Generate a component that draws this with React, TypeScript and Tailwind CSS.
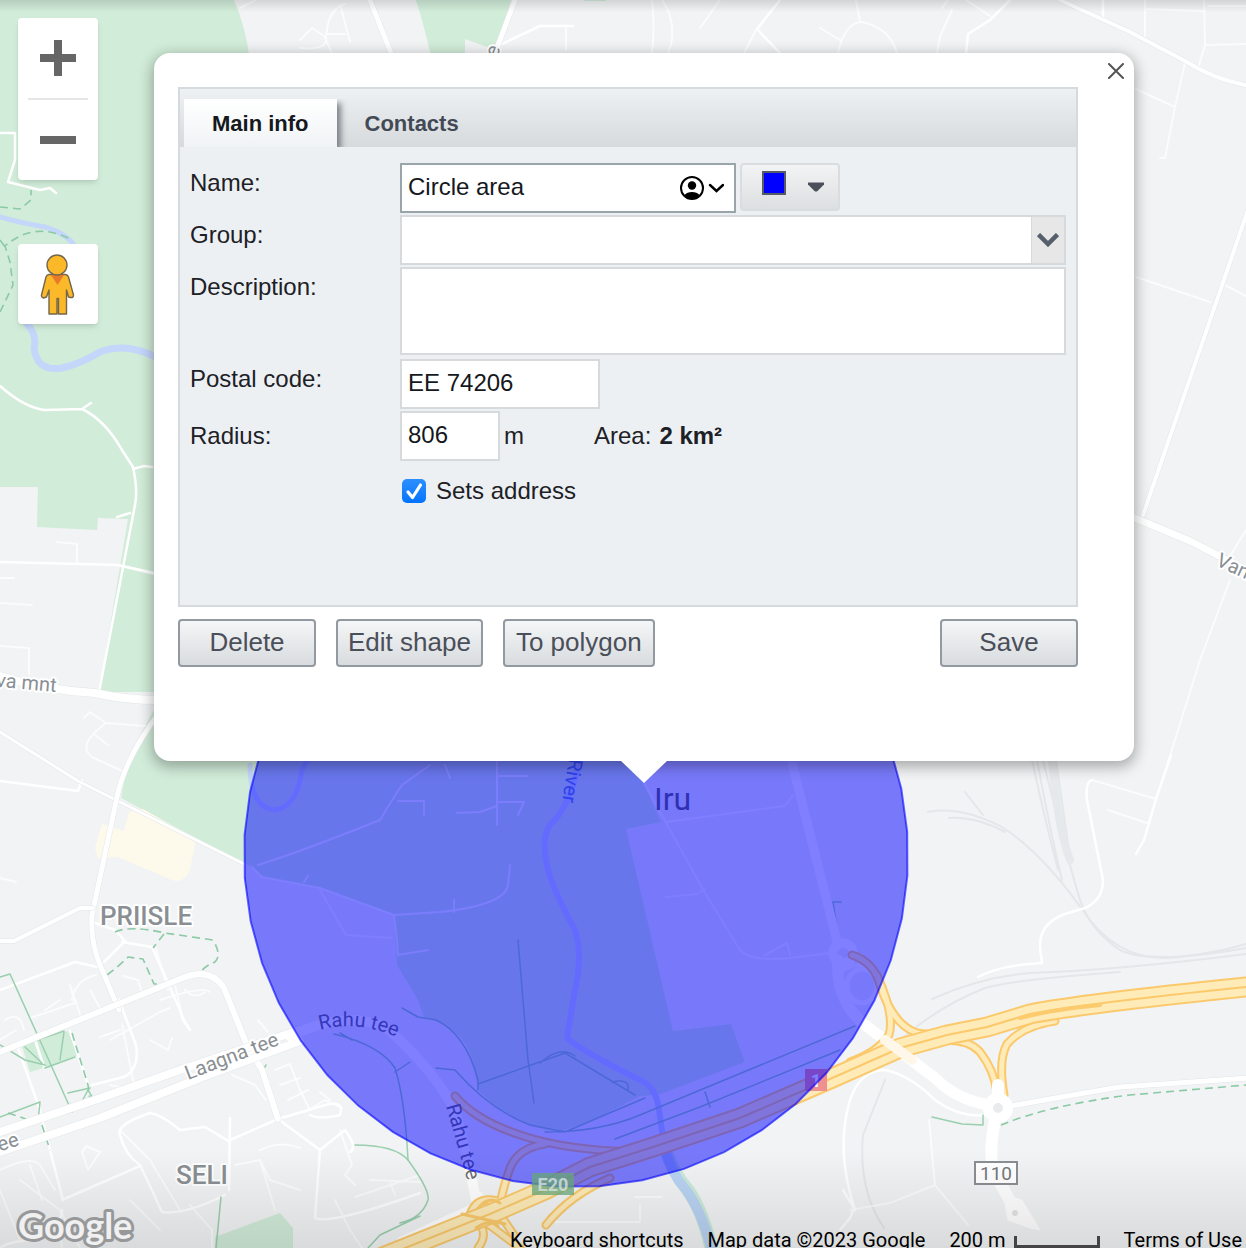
import React, { useState } from "react";

const LAND = "#f1f3f4";
const PARK = "#d1ecd9";
const WATER = "#c5d6fb";

const CIRCLE = { cx: 576, cy: 855, r: 332 };
const circlePoints = Array.from({ length: 48 }, (_, i) => {
  const a = ((i * 7.5 + 3.5) * Math.PI) / 180;
  const x = CIRCLE.cx + CIRCLE.r * Math.cos(a);
  const y = CIRCLE.cy + CIRCLE.r * Math.sin(a);
  return `${x.toFixed(1)},${y.toFixed(1)}`;
}).join(" ");

const parks = [
  "M0 0H234Q245 25 250 60V692H154L99 692L128 519L98 518L97 530L37 527L38 487H0Z",
  "M416 0H511L496 50L465 39V60H432Q424 25 416 0Z",
  "M584 0H606V1H584Z",
  "M160 700Q128 750 121 798L158 818L252 867L262 877L320 888L394 915L397 965L418 1000L424 1017L436 1020Q466 1034 473 1062L478 1090Q515 1128 560 1132L600 1117L640 1096L658 1095L745 1062L731 1024L673 1031L626 829L661 822L644 783L630 740Z",
  "M21 1043L68 1031L78 1055L50 1066L30 1072Z",
  "M215 1237L280 1213L293 1228V1248H215Z",
];

const railways = [
  "M1032 760Q1045 820 1058 870M1037 760Q1050 830 1062 880M1043 760Q1065 850 1080 900Q1090 930 1120 950Q1150 965 1246 948",
  "M928 812Q960 806 1000 826Q1040 850 1084 912Q1120 965 1180 957Q1220 952 1246 944",
  "M949 818Q975 816 1005 832M965 792L983 815M932 999Q980 977 1030 973Q1120 970 1246 954",
  "M885 1080L863 1135Q858 1190 884 1228M890 1050Q930 1010 985 988Q1010 980 1120 972",
  "M1050 760L1066 840M1056 760L1070 858",
];

const faintRoads = [
  "M240 8L256 0M300 40L312 28L324 36L332 53M345 4Q326 10 326 42Q322 50 300 48M341 8L350 42M326 34H345",
  "M652 0Q655 30 652 53M662 0Q676 20 671 45L668 53M720 0L700 28M952 10L940 36L937 53M942 8L948 0",
  "M820 28L840 40M838 53Q845 22 862 22Q890 28 897 53M856 0L860 22M966 0L990 16M744 53L756 30M566 25V50",
  "M57 542L77 544V564M0 578H14M0 603L32 605M0 646L29 648V674M120 566L154 574",
  "M0 878L16 882M84 718L90 712L106 723Q76 745 92 757L122 771M106 723L146 726M95 735L108 745",
  "M1145 0V36M1145 9L1203 11M1204 0L1205 45L1199 65M1205 45L1246 44M1208 6H1246M1136 89L1175 107M1185 63L1175 107L1165 158H1160M1136 277L1210 302M1221 283L1246 296M1246 530L1230 556M1230 580L1200 660L1168 762",
  "M1092 780L1156 799M1108 810L1150 824",
  "M72 1000Q75 980 96 975M5 1020Q20 1010 24 1030M0 1040L16 1030M30 1018L75 1003L70 985L82 1020M45 1010L60 1000M90 990L100 1008M123 976L138 980L142 992M156 948L168 990",
  "M175 985L182 1015L190 1030M160 1000Q205 985 210 992M110 1040L160 1012L170 1008M100 1037L120 1030M122 1024L135 1090L110 1085",
  "M185 990Q195 1000 205 992M150 1040L168 1050L172 1038M258 1020L268 1032M232 1075L255 1085L266 1100M275 1070L290 1064L300 1090L310 1110",
  "M280 1085L300 1078M288 1100L308 1090M305 1112L325 1100L342 1108M320 1092L330 1100M340 1130L352 1165L345 1175L355 1185",
  "M86 1146L100 1152L88 1170L82 1152ZM30 1165L42 1200M0 1170Q30 1155 40 1165L55 1190M120 1130L150 1160L165 1185L180 1210M260 1160L275 1210M235 1165L260 1160L270 1180L300 1190",
  "M0 1190L20 1240M20 1180L60 1210L80 1248M335 1200L350 1230L362 1248M370 1180L420 1182M355 1197L420 1175M390 1182L395 1195M260 1150Q280 1140 300 1148",
  "M190 1205L212 1230V1248M130 1200L160 1230M60 1230L62 1248M640 1205V1222M553 1222H640M635 1197H662",
  "M929 1120L935 1185L968 1225M935 1185L890 1203L850 1210",
];

const minorRoads = [
  "M0 133H15V160L8 182L40 190L50 188L56 193",
  "M0 386Q25 408 45 410L82 409L91 403M82 409Q105 420 122 450L133 467Q138 490 135 505L99 692M133 469L144 466L152 467M130 513L117 517",
  "M0 562L118 565L154 573",
  "M0 781L78 791L82 780",
  "M500 45L540 26L573 26M780 0L757 29L780 53M1010 0L990 20L968 34L966 53M1103 0V17",
  "M0 990L75 962L97 967M92 922L115 930L125 941L104 962M122 942L152 947L180 1010L183 1020L190 1030M0 1248Q10 1240 40 1240Q62 1225 62 1210",
  "M119 1000L136 1045Q140 1068 124 1077L92 1085M70 1031L88 1085M35 1040L44 1067M18 1048L40 1110L50 1150L63 1200",
  "M120 1135Q115 1125 150 1113Q162 1115 180 1130L205 1127L230 1142M120 1135Q125 1155 140 1165Q152 1190 162 1212Q185 1215 225 1195M62 1200L140 1166",
  "M230 1118L229 1190M230 1140L278 1119L320 1150M320 1150L315 1218Q330 1225 420 1193M320 1150L345 1130Q358 1148 350 1152M278 1119L325 1105Q345 1100 340 1115Q320 1120 310 1115",
  "M1171 755L1156 799L1144 840L1136 854M1092 780Q1085 782 1087 800L1103 880Q1103 900 1085 908L1065 914Q1035 925 1041 955L1042 963Q1000 965 978 977",
  "M843 1190L854 1208L850 1218L840 1230M855 1210Q835 1150 850 1100Q860 1070 885 1070Q910 1075 935 1100Q960 1118 985 1115",
];

const circleRoads = [
  "M258 865Q300 852 380 820Q395 795 402 785L430 765M398 801H424V815M252 867L262 877L320 888L394 915L440 912Q505 905 508 885L510 865M454 900V912M394 915L397 940L398 955L428 950",
  "M304 882L308 876M320 890L346 935L392 938M497 760V825M497 776H528M497 802H524L518 815M457 813L480 812L497 806M445 765L450 778",
  "M644 783L705 893L740 950Q750 962 790 958L830 953M666 897L697 894L705 889M666 822L785 806L793 795M765 955L787 943L790 955",
];

const trails = [
  "M0 1045L25 1060L45 1065M0 977L10 974L42 1045L72 1112L80 1105L88 1090L94 1100M68 1093L90 1088M0 1117L40 1102L38 1122M64 1032L60 1060M45 1068L75 1057M22 1045L64 1031M25 1047L42 1063",
  "M355 1145Q395 1145 408 1160Q430 1190 428 1200Q422 1218 400 1223M221 1197L216 1248M368 1248L380 1235L420 1216M266 1065L263 1070",
  "M932 1117L962 1124L983 1125V1115",
  "M334 1034Q380 1045 395 1068Q405 1100 408 1160M395 1072L410 1062M340 1033L352 1040M402 1008L418 1017L436 1020Q466 1034 478 1080V1090M436 1068L455 1070Q490 1110 530 1125L565 1132L600 1117L645 1098M478 1084L565 1053L635 1095M540 1063Q560 1045 575 1056M518 940L528 1060L534 1103M545 1132Q600 1132 640 1115L855 1026M615 1139L700 1107L840 1050M705 1092L710 1107M837 928L833 902H841M612 1082Q630 1078 628 1090",
];

const dashedTrails = [
  "M0 207L20 209L31 200V190M0 312L13 285L10 262L5 246Q35 220 72 240M0 240L6 248",
  "M115 932Q130 925 165 933L213 940Q222 955 215 962Q200 968 201 975M164 934L153 948",
  "M107 975Q120 965 128 957L143 959L154 984H160M72 1033L88 1085L90 1100M8 1113L38 1123M42 1125L50 1150",
  "M1001 1125Q1050 1105 1130 1095L1246 1085",
];

const motorways = [
  "M455 1096Q475 1120 520 1135Q570 1152 650 1152",
  "M545 1144Q518 1148 510 1168Q502 1190 498 1215",
  "M852 955Q874 962 880 985Q893 1025 917 1033Q930 1036 960 1030",
  "M877 975Q895 1015 889 1035Q878 1052 850 1062",
  "M930 1042Q965 1036 980 1052Q994 1070 997 1092",
  "M1055 1021Q1022 1026 1007 1044Q998 1060 1004 1095",
  "M546 1225Q570 1195 610 1178",
  "M478 1248Q492 1230 470 1215M470 1215Q478 1190 510 1206M480 1218L520 1248M490 1200L514 1235",
];

const MAIN_MOTORWAY =
  "M370 1262L490 1214L545 1190L590 1167L650 1148L740 1118L830 1079L900 1048L947 1035L987 1027L1030 1014Q1080 1004 1246 987";

const Road: React.FC<{ d: string; width: number }> = ({ d, width }) => (
  <>
    <path d={d} stroke="#e3e6e8" strokeWidth={width + 1} />
    <path d={d} stroke="#fff" strokeWidth={width} />
  </>
);

const MapCanvas: React.FC = () => (
  <svg
    className="absolute inset-0 h-full w-full"
    viewBox="0 0 1246 1248"
    preserveAspectRatio="xMinYMin slice"
    fontFamily="Roboto, sans-serif"
    aria-hidden="true"
  >
    <defs>
      <linearGradient id="topShade" x1="0" y1="0" x2="0" y2="1">
        <stop offset="0" stopColor="#000" stopOpacity="0.13" />
        <stop offset="1" stopColor="#000" stopOpacity="0" />
      </linearGradient>
      <linearGradient id="bottomShade" x1="0" y1="0" x2="0" y2="1">
        <stop offset="0" stopColor="#000" stopOpacity="0" />
        <stop offset="1" stopColor="#000" stopOpacity="0.1" />
      </linearGradient>
      <path id="rahuArc" d="M320 1030Q360 1019 403 1040" />
    </defs>

    <rect width="1246" height="1248" fill={LAND} />
    {parks.map((d) => (
      <path key={d} d={d} fill={PARK} />
    ))}
    <path
      d="M129 812L143 809L196 839L190 870Q184 884 172 880L118 857L98 858L95 848L102 824L124 831Z"
      fill="#fefaeb"
    />

    <g fill="none" strokeLinecap="round" strokeLinejoin="round">
      {/* rivers */}
      <path d="M0 217Q20 223 45 227Q68 234 76 248" stroke={WATER} strokeWidth="5" />
      <path d="M24 320Q38 335 34 347Q36 372 62 368Q80 364 100 352Q125 342 156 357" stroke={WATER} strokeWidth="7" />
      <path d="M250 765Q250 808 275 810Q297 807 302 770L310 755" stroke={WATER} strokeWidth="5" />
      <path d="M580 755Q572 805 550 825Q537 845 555 890Q568 918 575 930Q583 955 575 990L567 1038Q580 1050 640 1080Q656 1086 659 1110L664 1145" stroke={WATER} strokeWidth="6" />
      <path d="M664 1145Q672 1172 688 1190Q703 1212 711 1248" stroke="#c9ead8" strokeWidth="13" />
      <path d="M664 1145Q670 1172 686 1190Q702 1212 711 1248" stroke="#b9d3f3" strokeWidth="10" />

      {railways.map((d) => (
        <path key={d} d={d} stroke="#e4e7e9" strokeWidth="2" />
      ))}
      <path d="M1052 760Q1058 830 1070 860" stroke="#e6e9eb" strokeWidth="8" />
      {faintRoads.map((d) => (
        <path key={d} d={d} stroke="#fff" strokeWidth="2" strokeOpacity="0.7" />
      ))}
      {circleRoads.map((d) => (
        <path key={d} d={d} stroke="#fff" strokeWidth="2" strokeOpacity="0.8" />
      ))}
      {minorRoads.map((d) => (
        <path key={d} d={d} stroke="#fff" strokeWidth="2.5" />
      ))}
      {trails.map((d) => (
        <path key={d} d={d} stroke="#99cfae" strokeWidth="1.5" />
      ))}
      {dashedTrails.map((d) => (
        <path key={d} d={d} stroke="#8bcaa5" strokeWidth="1.6" strokeDasharray="8 5" strokeLinecap="butt" />
      ))}

      {/* collector roads */}
      <Road d="M0 732L78 781L244 864" width={3} />
      <Road d="M160 712Q123 760 116 802L92 915Q90 940 100 965L119 1010" width={5} />
      <Road d="M0 941H14L80 908H93" width={4} />
      <Road d="M0 1052L180 979Q210 966 224 988L246 1043L262 1070L278 1119" width={6} />
      <Road d="M370 0L391 53" width={5} />
      <Road d="M515 0L497 48" width={5} />
      <Road d="M1060 0L1130 32L1185 61Q1215 80 1250 86" width={4} />
      <Road d="M1250 204L1142 518" width={4} />
      <Road d="M1000 1108Q1060 1097 1120 1087L1250 1078" width={5} />

      {/* main streets */}
      <Road d="M0 676Q45 690 95 693Q125 700 160 700" width={8} />
      <Road d="M1130 516L1190 541L1250 572" width={7} />
      <Road d="M0 1132L95 1100L180 1070L300 1030" width={8} />
      <Road d="M0 1152L100 1118L200 1078L300 1041" width={8} />
      <path d="M290 1036Q345 1010 385 1027Q430 1065 455 1110L470 1170L478 1210" stroke="#fff" strokeWidth="10" />
      <path d="M790 755L838 945" stroke="#fff" strokeWidth="9" />
      <path d="M838 960Q835 1000 865 1025L935 1078Q960 1103 998 1106" stroke="#fff" strokeWidth="11" />
      <path d="M843 970Q870 955 880 985" stroke="#fff" strokeWidth="4" />
      <ellipse cx="862" cy="986" rx="15" ry="17" stroke="#fff" strokeWidth="5" />
      <circle cx="843" cy="953" r="10" stroke="#fff" strokeWidth="9" />
      <path d="M400 1240L470 1208M480 1195L490 1210" stroke="#fff" strokeWidth="6" />

      {/* motorways */}
      {motorways.map((d) => (
        <path key={d} d={d} stroke="#fbc96b" strokeWidth="9" />
      ))}
      {motorways.map((d) => (
        <path key={d} d={d} stroke="#feebb8" strokeWidth="5" />
      ))}
      <path d={MAIN_MOTORWAY} stroke="#fbc96b" strokeWidth="21" />
      <path d={MAIN_MOTORWAY} stroke="#feebb8" strokeWidth="17" />
      <path d={MAIN_MOTORWAY} stroke="#fbc96b" strokeWidth="2" />
      <path d="M1020 1018Q1050 1010 1100 1005" stroke="#fbcb6e" strokeWidth="4" />
      <path d="M462 1214L505 1224M476 1228Q490 1218 498 1226M480 1206Q490 1196 500 1203" stroke="#fbc96b" strokeWidth="3" />
      <path d="M885 1040L912 1060" stroke="#fff8ea" strokeWidth="10" />

      <path d="M998 1085V1108Q988 1145 993 1170L1015 1210" stroke="#fff" strokeWidth="12" />
      <path d="M1004 1195L1022 1200L1040 1230L1030 1228L1008 1220Z" fill="#fff" stroke="#fff" />
      <circle cx="998" cy="1108" r="10" stroke="#fff" strokeWidth="10" fill="#e9ebec" />
      <circle cx="1015" cy="1213" r="3" fill="#e2e4e6" />
    </g>

    {/* place labels */}
    <g fill="#8a8f94" fontSize="20" stroke="#fff" strokeWidth="4" strokeLinejoin="round" paintOrder="stroke">
      <text x="56" y="692" textAnchor="end" transform="rotate(5 56 692)">va mnt</text>
      <text x="188" y="1080" transform="rotate(-21 188 1080)">Laagna tee</text>
      <text x="20" y="1145" textAnchor="end" transform="rotate(-18 20 1145)">ee</text>
      <text x="1215" y="565" transform="rotate(25 1215 565)">Van</text>
      <text x="497" y="58" transform="rotate(-70 497 58)">e</text>
      <text x="146" y="925" fontSize="26" fontWeight="500" textAnchor="middle">PRIISLE</text>
      <text x="202" y="1184" fontSize="26" fontWeight="500" textAnchor="middle">SELI</text>
    </g>
    <g fill="#6b6e73" fontSize="20">
      <text><textPath href="#rahuArc">Rahu tee</textPath></text>
      <text x="446" y="1106" transform="rotate(74 446 1106)">Rahu tee</text>
      <text x="569" y="758" fill="#5a83d8" transform="rotate(99 569 758)">River</text>
      <text x="654" y="810" fontSize="32" fill="#5f6368">Iru</text>
    </g>

    {/* route shields */}
    <rect x="805" y="1069" width="22" height="22" fill="#f08f90" />
    <text x="816" y="1087" fontSize="18" fontWeight="700" fill="#fff" textAnchor="middle">1</text>
    <rect x="975" y="1162" width="42" height="22" fill="#fff" stroke="#8b8f93" strokeWidth="2" />
    <text x="996" y="1180" fontSize="19" fill="#75797d" textAnchor="middle">110</text>

    <polygon points={circlePoints} fill="#0000ff" fillOpacity="0.5" stroke="#0000ff" strokeOpacity="0.6" strokeWidth="2" />

    <rect x="532" y="1173" width="42" height="22" fill="#68ab7c" fillOpacity="0.75" />
    <text x="553" y="1191" fontSize="18" fontWeight="700" fill="#dfe9ee" fillOpacity="0.8" textAnchor="middle">E20</text>

    <rect width="1246" height="12" fill="url(#topShade)" />
    <rect y="1150" width="1246" height="98" fill="url(#bottomShade)" />
  </svg>
);

const Pegman: React.FC = () => (
  <svg viewBox="0 0 36 62" className="h-[62px] w-9" stroke="#73664a" strokeWidth="1.4" strokeLinejoin="round">
    <path
      d="M9 21.500H25Q27.500 21.500 28.500 24L33.500 42Q33.500 45 30.500 44.500L28.500 44L26.500 37V61H18.500V45.500H17V61H9V37L6.500 44L3.500 45Q1 44 1.500 42L6 24Q7 21.500 9 21.500Z"
      fill="#fbb829"
    />
    <path d="M11 22H24L17.500 32Z" fill="#e9792b" stroke="none" />
    <circle cx="17" cy="12" r="10" fill="#fbb829" />
  </svg>
);

const MapControls: React.FC = () => (
  <div className="flex w-20 shrink-0 flex-col gap-16 pt-[18px]">
    <div className="flex flex-col items-center rounded bg-white shadow-md">
      <button aria-label="Zoom in" className="flex h-20 w-20 items-center justify-center">
        <svg viewBox="0 0 36 36" className="h-9 w-9" fill="#666">
          <path d="M14 0h8v14h14v8H22v14h-8V22H0v-8h14z" />
        </svg>
      </button>
      <div className="h-0.5 w-[60px] bg-[#e6e6e6]" />
      <button aria-label="Zoom out" className="flex h-20 w-20 items-center justify-center">
        <svg viewBox="0 0 36 8" className="h-2 w-9" fill="#666">
          <path d="M0 0h36v8H0z" />
        </svg>
      </button>
    </div>
    <button aria-label="Street View" className="flex h-20 w-20 items-center justify-center rounded bg-white shadow-md">
      <Pegman />
    </button>
  </div>
);

const labelClass = "w-[210px] shrink-0 leading-10";
const fieldClass = "border-2 border-[#d6dadd] bg-white px-1.5 pb-0.5 text-2xl text-[#15181c] outline-none";
const buttonClass =
  "h-12 rounded border-2 border-[#9299a1] bg-linear-to-b from-[#f4f6f7] to-[#d9dcdf] pb-0.5 text-[26px] text-[#4a4f59]";

const AreaForm: React.FC = () => {
  const [name, setName] = useState("Circle area");
  const [description, setDescription] = useState("");
  const [postalCode, setPostalCode] = useState("EE 74206");
  const [radius, setRadius] = useState("806");
  const [setsAddress, setSetsAddress] = useState(true);

  return (
    <form className="flex flex-col gap-0.5 pt-4 pr-2.5 pb-[98px] pl-2.5 text-2xl text-[#1d2126]">
      <div className="flex items-start">
        <label htmlFor="name" className={labelClass}>Name:</label>
        <div className="relative mr-1 w-[336px]">
          <input
            id="name"
            value={name}
            onChange={(e) => setName(e.target.value)}
            className="h-[50px] w-full border-2 border-[#9aa4ab] bg-white pr-16 pb-0.5 pl-1.5 text-2xl text-[#15181c] outline-none"
          />
          <div className="pointer-events-none absolute inset-y-0 right-3 flex items-center gap-1">
            <svg viewBox="0 0 24 24" className="h-6 w-6">
              <circle cx="12" cy="12" r="11" fill="#fff" stroke="#000" strokeWidth="2" />
              <circle cx="12" cy="9.500" r="4.200" fill="#000" />
              <path d="M4.500 19Q7 16 12 16T19.500 19Q16.500 23 12 23T4.500 19Z" fill="#000" />
            </svg>
            <svg viewBox="0 0 16 10" className="h-2.5 w-4" fill="none" stroke="#000" strokeWidth="2.400" strokeLinecap="round">
              <path d="M2 2L8.500 8L15 2" />
            </svg>
          </div>
        </div>
        <button
          type="button"
          aria-label="Color"
          className="flex h-12 w-[100px] items-center gap-[22px] rounded border-2 border-[#d9dde0] bg-linear-to-b from-[#f2f3f4] to-[#dcdfe1] pl-5"
        >
          <span className="mb-2 h-6 w-6 border-2 border-[#565b66] bg-[#0000ff]" />
          <svg viewBox="0 0 16 10" className="h-2.5 w-4" fill="#4a4f59">
            <path d="M0 0.500H16V2.500L9.500 9Q8 10 6.500 9L0 2.500Z" />
          </svg>
        </button>
      </div>

      <div className="flex items-start">
        <label htmlFor="group" className={labelClass}>Group:</label>
        <div className="relative flex-1">
          <select id="group" className={`${fieldClass} h-[50px] w-full appearance-none`} />
          <div className="pointer-events-none absolute inset-y-0.5 right-0.5 flex w-[33px] items-center justify-center border-l border-[#d6dadd] bg-[#e7e7e7]">
            <svg viewBox="0 0 22 14" className="h-3.5 w-[22px]" fill="none" stroke="#56606c" strokeWidth="4.500">
              <path d="M1.500 1.500L11 11L20.500 1.500" />
            </svg>
          </div>
        </div>
      </div>

      <div className="mb-0.5 flex items-start">
        <label htmlFor="description" className={labelClass}>Description:</label>
        <textarea
          id="description"
          value={description}
          onChange={(e) => setDescription(e.target.value)}
          className={`${fieldClass} h-[88px] flex-1 resize-none`}
        />
      </div>

      <div className="flex items-start">
        <label htmlFor="postal" className={labelClass}>Postal code:</label>
        <input
          id="postal"
          value={postalCode}
          onChange={(e) => setPostalCode(e.target.value)}
          className={`${fieldClass} h-[50px] w-[200px]`}
        />
      </div>

      <div className="flex items-center">
        <label htmlFor="radius" className={labelClass}>Radius:</label>
        <input
          id="radius"
          value={radius}
          onChange={(e) => setRadius(e.target.value)}
          className={`${fieldClass} h-[50px] w-[100px]`}
        />
        <span className="ml-1">m</span>
        <span className="ml-[70px]">Area:</span>
        <b className="ml-2">2 km²</b>
      </div>

      <div className="mt-3 flex items-center gap-2.5 pl-[212px]">
        <span className="relative h-6 w-6">
          <input
            id="sets-address"
            type="checkbox"
            checked={setsAddress}
            onChange={(e) => setSetsAddress(e.target.checked)}
            className="block h-6 w-6 appearance-none rounded-[5px] border border-gray-400 bg-white checked:border-0 checked:bg-linear-to-b checked:from-[#2b8fff] checked:to-[#0073ff]"
          />
          {setsAddress && (
            <svg viewBox="0 0 24 24" className="pointer-events-none absolute inset-0" fill="none" stroke="#fff" strokeWidth="3.200" strokeLinecap="round" strokeLinejoin="round">
              <path d="M6 13L10.500 18.500L18.500 6" />
            </svg>
          )}
        </span>
        <label htmlFor="sets-address" className="leading-8">Sets address</label>
      </div>
    </form>
  );
};

const AreaDialog: React.FC = () => (
  <div
    role="dialog"
    aria-label="Circle area"
    className="relative mt-[53px] flex-1 rounded-2xl bg-white pt-[34px] pr-14 pb-[94px] pl-6 shadow-[0_4px_14px_2px_rgba(0,0,0,0.3)]"
  >
    <button aria-label="Close" className="absolute top-2.5 right-2.5 p-0">
      <svg viewBox="0 0 16 16" className="h-4 w-4" fill="none" stroke="#555" strokeWidth="2" strokeLinecap="round">
        <path d="M1 1L15 15M15 1L1 15" />
      </svg>
    </button>

    <div className="border-2 border-[#d5dade] bg-[#ecf0f3]">
      <div role="tablist" className="flex items-end bg-linear-to-b from-[#edf1f4] to-[#d6dadd] pt-2.5 pl-1 text-[22px] font-bold">
        <button
          role="tab"
          aria-selected="true"
          className="h-12 bg-linear-to-b from-white to-[#f0f3f5] px-7 text-[#15181c] shadow-[4px_4px_6px_rgba(60,65,75,0.6)] [clip-path:inset(0_-12px_0_0)]"
        >
          Main info
        </button>
        <button role="tab" aria-selected="false" className="h-12 px-7 text-[#434a56]">
          Contacts
        </button>
      </div>
      <AreaForm />
    </div>

    <div className="mt-3 flex gap-5">
      <button className={`${buttonClass} w-[138px]`}>Delete</button>
      <button className={`${buttonClass} px-2.5`}>Edit shape</button>
      <button className={`${buttonClass} px-[11px]`}>To polygon</button>
      <button className={`${buttonClass} ml-auto w-[138px]`}>Save</button>
    </div>

    <svg viewBox="0 0 48 24" className="absolute top-full left-1/2 -mt-px h-6 w-12 -translate-x-1/2" fill="#fff">
      <path d="M0 0H48L24 23Z" />
    </svg>
  </div>
);

const MapFooter: React.FC = () => (
  <footer className="relative mt-auto flex h-5 items-end justify-between pr-1 pl-[17px] font-[Roboto,sans-serif] text-xl leading-6 text-black">
    <svg className="h-10 w-[120px] overflow-visible" viewBox="0 0 120 40" aria-label="Google">
      <text
        x="1"
        y="31"
        fontFamily="Lato, sans-serif"
        fontWeight="700"
        fontSize="36"
        fill="#f0f0f1"
        stroke="#97989a"
        strokeWidth="6"
        strokeLinejoin="round"
        paintOrder="stroke"
      >
        Google
      </text>
    </svg>
    <div className="flex h-5 gap-6 whitespace-nowrap">
      <button className="h-6">Keyboard shortcuts</button>
      <span>Map data ©2023 Google</span>
      <span className="flex gap-2">
        200 m
        <span className="mt-2 h-3 w-[86px] border-x-[3px] border-b-[3px] border-[#444]" />
      </span>
      <a href="#terms">Terms of Use</a>
    </div>
  </footer>
);

export default function App() {
  return (
    <div className="relative flex h-screen flex-col overflow-hidden font-['Liberation_Sans',Arial,sans-serif]">
      <MapCanvas />
      <main className="relative flex items-start gap-14 pr-28 pl-[18px]">
        <MapControls />
        <AreaDialog />
      </main>
      <MapFooter />
    </div>
  );
}
